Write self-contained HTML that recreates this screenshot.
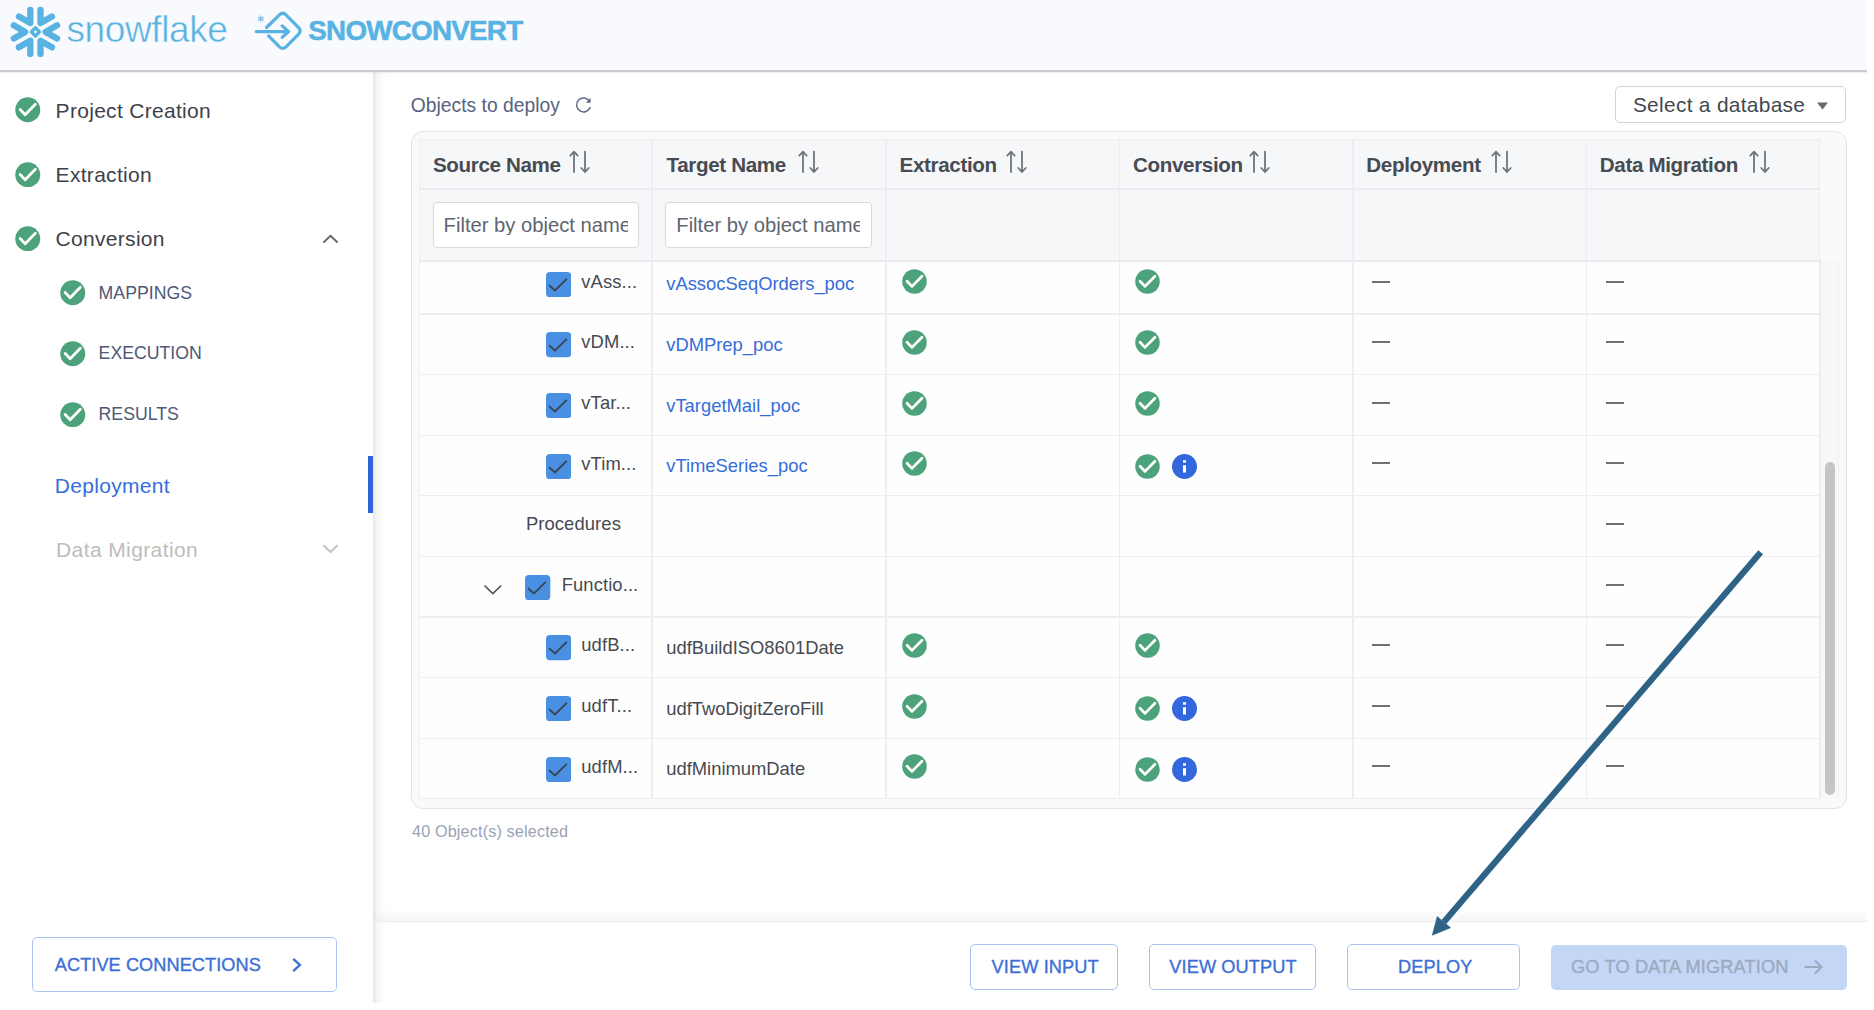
<!DOCTYPE html><html><head><meta charset="utf-8"><style>
html,body{margin:0;padding:0;background:#fff;width:1874px;height:1010px;overflow:hidden;position:relative}
.t{position:absolute;line-height:1;white-space:nowrap;font-family:"Liberation Sans",sans-serif}
.a{position:absolute;display:block}
.box{position:absolute;box-sizing:border-box}
</style></head><body>
<div class="box" style="left:0;top:0;width:1867px;height:69.5px;background:#F9FAFD"></div>
<div class="box" style="left:0;top:69.5px;width:1867px;height:2.5px;background:#CBCBCB"></div>
<div class="box" style="left:0;top:72px;width:1867px;height:2px;background:linear-gradient(#ececec,#fff)"></div>
<svg class="a" style="left:0;top:0" width="70" height="70"><path d="M57.03 25.30L45.60 31.90L57.03 38.50 M51.93 47.33L40.50 40.73L40.50 53.93 M30.30 53.93L30.30 40.73L18.87 47.33 M13.77 38.50L25.20 31.90L13.77 25.30 M18.87 16.47L30.30 23.07L30.30 9.87 M40.50 9.87L40.50 23.07L51.93 16.47" fill="none" stroke="#58B3E3" stroke-width="6.3" stroke-linecap="round" stroke-linejoin="round"/><path d="M35.4 27.799999999999997L39.5 31.9L35.4 36.0L31.299999999999997 31.9Z" fill="none" stroke="#58B3E3" stroke-width="3.4" stroke-linejoin="round"/></svg>
<div class="t" style="left:66.5px;top:10.68px;font-size:37px;color:#58B3E3;font-weight:400;letter-spacing:-0.4px;-webkit-text-stroke:0.45px #F9FAFD;">snowflake</div>
<svg class="a" style="left:250px;top:9.3px" width="60" height="48" viewBox="250 8 60 48">
<path d="M266.5 26.5 L279.5 13.8 Q282.8 10.8 286 13.8 L298.6 26.6 Q301.6 29.9 298.6 33.1 L286 45.8 Q282.8 48.9 279.5 45.8 L268.6 34.9" fill="none" stroke="#58B3E3" stroke-width="3.2" stroke-linecap="round" stroke-linejoin="round"/>
<path d="M256.2 30.6 L288.5 30.6 M282.2 24.9 L288.6 30.6 L282.2 36.3" fill="none" stroke="#58B3E3" stroke-width="3.2" stroke-linecap="round" stroke-linejoin="round"/>
<path d="M260.8 14.9 V20.7 M258.3 16.35 L263.3 19.25 M258.3 19.25 L263.3 16.35" stroke="#7FC3EA" stroke-width="1.3" stroke-linecap="round"/>
</svg>
<div class="t" style="left:308.3px;top:16.67px;font-size:27.8px;color:#58B3E3;font-weight:700;letter-spacing:-0.75px;-webkit-text-stroke:0.5px #58B3E3;">SNOWCONVERT</div>
<div class="box" style="left:373px;top:72px;width:14px;height:931px;background:linear-gradient(to right,rgba(0,0,0,0.10),rgba(0,0,0,0.03) 30%,rgba(0,0,0,0))"></div>
<svg class="a" style="left:15.1px;top:97.2px" width="25.5" height="25.5" viewBox="-12.75 -12.75 25.5 25.5"><circle r="12.5" fill="#4CA27A"/><path d="M-7.6 -0.2 L-2.6 5 L7.6 -5.4" fill="none" stroke="#fff" stroke-width="2.8" stroke-linecap="round" stroke-linejoin="round"/></svg>
<div class="t" style="left:55.6px;top:100.02px;font-size:21px;color:#3D4249;font-weight:400;letter-spacing:0.3px;">Project Creation</div>
<svg class="a" style="left:15.1px;top:161.6px" width="25.5" height="25.5" viewBox="-12.75 -12.75 25.5 25.5"><circle r="12.5" fill="#4CA27A"/><path d="M-7.6 -0.2 L-2.6 5 L7.6 -5.4" fill="none" stroke="#fff" stroke-width="2.8" stroke-linecap="round" stroke-linejoin="round"/></svg>
<div class="t" style="left:55.6px;top:164.22px;font-size:21px;color:#3D4249;font-weight:400;letter-spacing:0.3px;">Extraction</div>
<svg class="a" style="left:15.1px;top:225.8px" width="25.5" height="25.5" viewBox="-12.75 -12.75 25.5 25.5"><circle r="12.5" fill="#4CA27A"/><path d="M-7.6 -0.2 L-2.6 5 L7.6 -5.4" fill="none" stroke="#fff" stroke-width="2.8" stroke-linecap="round" stroke-linejoin="round"/></svg>
<div class="t" style="left:55.6px;top:228.32px;font-size:21px;color:#3D4249;font-weight:400;letter-spacing:0.3px;">Conversion</div>
<svg class="a" style="left:318px;top:228px" width="24" height="20"><path d="M6 14 L12.5 7.8 L19 14" fill="none" stroke="#686A6E" stroke-width="2" stroke-linecap="round" stroke-linejoin="round"/></svg>
<svg class="a" style="left:60.3px;top:280.2px" width="25.5" height="25.5" viewBox="-12.75 -12.75 25.5 25.5"><circle r="12.5" fill="#4CA27A"/><path d="M-7.6 -0.2 L-2.6 5 L7.6 -5.4" fill="none" stroke="#fff" stroke-width="2.8" stroke-linecap="round" stroke-linejoin="round"/></svg>
<div class="t" style="left:98.6px;top:284.62px;font-size:17.7px;color:#4D5976;font-weight:400;letter-spacing:0px;">MAPPINGS</div>
<svg class="a" style="left:60.3px;top:341.1px" width="25.5" height="25.5" viewBox="-12.75 -12.75 25.5 25.5"><circle r="12.5" fill="#4CA27A"/><path d="M-7.6 -0.2 L-2.6 5 L7.6 -5.4" fill="none" stroke="#fff" stroke-width="2.8" stroke-linecap="round" stroke-linejoin="round"/></svg>
<div class="t" style="left:98.6px;top:345.22px;font-size:17.7px;color:#4D5976;font-weight:400;letter-spacing:0px;">EXECUTION</div>
<svg class="a" style="left:60.3px;top:401.6px" width="25.5" height="25.5" viewBox="-12.75 -12.75 25.5 25.5"><circle r="12.5" fill="#4CA27A"/><path d="M-7.6 -0.2 L-2.6 5 L7.6 -5.4" fill="none" stroke="#fff" stroke-width="2.8" stroke-linecap="round" stroke-linejoin="round"/></svg>
<div class="t" style="left:98.6px;top:405.92px;font-size:17.7px;color:#4D5976;font-weight:400;letter-spacing:0px;">RESULTS</div>
<div class="t" style="left:54.8px;top:475.22px;font-size:21px;color:#356EDB;font-weight:400;letter-spacing:0.3px;">Deployment</div>
<div class="box" style="left:368px;top:456.3px;width:5px;height:56.3px;background:#2F63D9"></div>
<div class="t" style="left:56.0px;top:538.82px;font-size:21px;color:#BDBDBD;font-weight:400;letter-spacing:0.4px;">Data Migration</div>
<svg class="a" style="left:318px;top:540px" width="24" height="20"><path d="M6 5.8 L12.5 12 L19 5.8" fill="none" stroke="#C2C2C2" stroke-width="2" stroke-linecap="round" stroke-linejoin="round"/></svg>
<div class="box" style="left:32px;top:937.3px;width:304.5px;height:54.6px;border:1.6px solid #A9C3F0;border-radius:5px"></div>
<div class="t" style="left:54.8px;top:955.99px;font-size:18.2px;color:#3B6FD6;font-weight:400;letter-spacing:0.05px;-webkit-text-stroke:0.35px #3B6FD6;">ACTIVE CONNECTIONS</div>
<svg class="a" style="left:286px;top:954px" width="22" height="22"><path d="M7.2 4.8 L13.8 11 L7.2 17.2" fill="none" stroke="#3B6FD6" stroke-width="2.4"/></svg>
<div class="t" style="left:410.8px;top:96.26px;font-size:19.3px;color:#58627E;font-weight:400;letter-spacing:0px;">Objects to deploy</div>
<svg class="a" style="left:572px;top:94px" width="22" height="22" viewBox="572 94 22 22"><path d="M589.6 101.3 A7 7 0 1 0 590.3 107" fill="none" stroke="#5F6883" stroke-width="1.5"/><path d="M590.6 98 L590.6 102.8 L585.8 102.8 Z" fill="#5F6883"/></svg>
<div class="box" style="left:1615.4px;top:86.4px;width:231px;height:37px;border:1.6px solid #D0D3D8;border-radius:5px;background:#fff"></div>
<div class="t" style="left:1632.9px;top:95.01px;font-size:20.9px;color:#43484E;font-weight:400;letter-spacing:0.3px;">Select a database</div>
<svg class="a" style="left:1815px;top:100px" width="16" height="12"><path d="M2 2.5 L13 2.5 L7.5 9.4 Z" fill="#6A6A6A"/></svg>
<div class="box" style="left:411px;top:131px;width:1435.7px;height:678px;border:1.6px solid #E1E4EC;border-radius:12px;background:#FAFAFA"></div>
<div class="box" style="left:419px;top:139px;width:1401px;height:660px;background:#FEFEFE;border:1px solid #EDEEF1"></div>
<div class="box" style="left:419px;top:139px;width:1401px;height:122px;background:#F6F7F9;border:1px solid #ECEEF1"></div>
<div class="box" style="left:419px;top:188.3px;width:1401px;height:1.4px;background:#EAECEF"></div>
<div class="box" style="left:419px;top:260.3px;width:1401px;height:1.6px;background:#E9EBEE"></div>
<div class="box" style="left:1819.5px;top:261px;width:19px;height:538px;background:#F8F8F8;border-left:1px solid #EBEBEB;border-right:1px solid #EFEFEF"></div>
<div class="box" style="left:1825px;top:462px;width:10px;height:333px;background:#C5C5C5;border-radius:5px"></div>
<div class="box" style="left:419px;top:313.3px;width:1401px;height:1.4px;background:#ECEEF1"></div>
<div class="box" style="left:419px;top:373.9px;width:1401px;height:1.4px;background:#ECEEF1"></div>
<div class="box" style="left:419px;top:434.5px;width:1401px;height:1.4px;background:#ECEEF1"></div>
<div class="box" style="left:419px;top:495.1px;width:1401px;height:1.4px;background:#ECEEF1"></div>
<div class="box" style="left:419px;top:555.7px;width:1401px;height:1.4px;background:#ECEEF1"></div>
<div class="box" style="left:419px;top:616.3px;width:1401px;height:1.4px;background:#ECEEF1"></div>
<div class="box" style="left:419px;top:676.9px;width:1401px;height:1.4px;background:#ECEEF1"></div>
<div class="box" style="left:419px;top:737.5px;width:1401px;height:1.4px;background:#ECEEF1"></div>
<div class="box" style="left:419px;top:798.1px;width:1401px;height:1.4px;background:#ECEEF1"></div>
<div class="box" style="left:651.3px;top:139px;width:1.4px;height:660px;background:#ECEEF1"></div>
<div class="box" style="left:885.3px;top:139px;width:1.4px;height:660px;background:#ECEEF1"></div>
<div class="box" style="left:1118.8px;top:139px;width:1.4px;height:660px;background:#ECEEF1"></div>
<div class="box" style="left:1352.3px;top:139px;width:1.4px;height:660px;background:#ECEEF1"></div>
<div class="box" style="left:1585.8px;top:139px;width:1.4px;height:660px;background:#ECEEF1"></div>
<div class="t" style="left:432.9px;top:154.86px;font-size:20.6px;color:#474C53;font-weight:700;letter-spacing:-0.35px;">Source Name</div>
<svg class="a" style="left:569.2px;top:148px" width="24" height="28" viewBox="0 0 24 28"><path d="M5 3.6 L5 24 M1.3 7.6 L5 3.6 L8.7 7.6 M16 3.6 L16 24 M12.3 20 L16 24 L19.7 20" fill="none" stroke="#6E747B" stroke-width="1.8" stroke-linecap="round" stroke-linejoin="round"/></svg>
<div class="t" style="left:666.5px;top:154.86px;font-size:20.6px;color:#474C53;font-weight:700;letter-spacing:-0.35px;">Target Name</div>
<svg class="a" style="left:797.5px;top:148px" width="24" height="28" viewBox="0 0 24 28"><path d="M5 3.6 L5 24 M1.3 7.6 L5 3.6 L8.7 7.6 M16 3.6 L16 24 M12.3 20 L16 24 L19.7 20" fill="none" stroke="#6E747B" stroke-width="1.8" stroke-linecap="round" stroke-linejoin="round"/></svg>
<div class="t" style="left:899.6px;top:154.86px;font-size:20.6px;color:#474C53;font-weight:700;letter-spacing:-0.35px;">Extraction</div>
<svg class="a" style="left:1006px;top:148px" width="24" height="28" viewBox="0 0 24 28"><path d="M5 3.6 L5 24 M1.3 7.6 L5 3.6 L8.7 7.6 M16 3.6 L16 24 M12.3 20 L16 24 L19.7 20" fill="none" stroke="#6E747B" stroke-width="1.8" stroke-linecap="round" stroke-linejoin="round"/></svg>
<div class="t" style="left:1133.0px;top:154.86px;font-size:20.6px;color:#474C53;font-weight:700;letter-spacing:-0.35px;">Conversion</div>
<svg class="a" style="left:1249px;top:148px" width="24" height="28" viewBox="0 0 24 28"><path d="M5 3.6 L5 24 M1.3 7.6 L5 3.6 L8.7 7.6 M16 3.6 L16 24 M12.3 20 L16 24 L19.7 20" fill="none" stroke="#6E747B" stroke-width="1.8" stroke-linecap="round" stroke-linejoin="round"/></svg>
<div class="t" style="left:1366.3px;top:154.86px;font-size:20.6px;color:#474C53;font-weight:700;letter-spacing:-0.35px;">Deployment</div>
<svg class="a" style="left:1490.5px;top:148px" width="24" height="28" viewBox="0 0 24 28"><path d="M5 3.6 L5 24 M1.3 7.6 L5 3.6 L8.7 7.6 M16 3.6 L16 24 M12.3 20 L16 24 L19.7 20" fill="none" stroke="#6E747B" stroke-width="1.8" stroke-linecap="round" stroke-linejoin="round"/></svg>
<div class="t" style="left:1599.8px;top:154.86px;font-size:20.6px;color:#474C53;font-weight:700;letter-spacing:-0.35px;">Data Migration</div>
<svg class="a" style="left:1749px;top:148px" width="24" height="28" viewBox="0 0 24 28"><path d="M5 3.6 L5 24 M1.3 7.6 L5 3.6 L8.7 7.6 M16 3.6 L16 24 M12.3 20 L16 24 L19.7 20" fill="none" stroke="#6E747B" stroke-width="1.8" stroke-linecap="round" stroke-linejoin="round"/></svg>
<div class="box" style="left:432.6px;top:202.2px;width:206.5px;height:45.6px;border:1.6px solid #D6DADF;border-radius:4px;background:#fff;overflow:hidden"><div class="t" style="left:10px;top:11.50px;font-size:20.2px;color:#5E6570;width:184px;overflow:hidden">Filter by object name</div></div>
<div class="box" style="left:665.3px;top:202.2px;width:206.5px;height:45.6px;border:1.6px solid #D6DADF;border-radius:4px;background:#fff;overflow:hidden"><div class="t" style="left:10px;top:11.50px;font-size:20.2px;color:#5E6570;width:184px;overflow:hidden">Filter by object name</div></div>
<svg class="a" style="left:545.6px;top:271.7px" width="25.3" height="25.3" viewBox="0 0 25.3 25.3"><rect x="0" y="0" width="25.3" height="25.3" rx="4" fill="#4A90E2"/><path d="M2.9 13.1 L9 18.4 L20.8 6.9" fill="none" stroke="#3A4450" stroke-width="1.9"/></svg>
<div class="t" style="left:581.3px;top:272.72px;font-size:18.4px;color:#464A51;font-weight:400;letter-spacing:0.1px;">vAss...</div>
<div class="t" style="left:666.2px;top:275.32px;font-size:18.4px;color:#356DDA;font-weight:400;letter-spacing:0px;">vAssocSeqOrders_poc</div>
<svg class="a" style="left:902.1px;top:269.4px" width="25" height="25" viewBox="-12.75 -12.75 25.5 25.5"><circle r="12.5" fill="#4CA27A"/><path d="M-7.6 -0.2 L-2.6 5 L7.6 -5.4" fill="none" stroke="#fff" stroke-width="2.8" stroke-linecap="round" stroke-linejoin="round"/></svg>
<svg class="a" style="left:1135.2px;top:269.4px" width="25" height="25" viewBox="-12.75 -12.75 25.5 25.5"><circle r="12.5" fill="#4CA27A"/><path d="M-7.6 -0.2 L-2.6 5 L7.6 -5.4" fill="none" stroke="#fff" stroke-width="2.8" stroke-linecap="round" stroke-linejoin="round"/></svg>
<div class="a" style="left:1371.6px;top:280.59999999999997px;width:18px;height:2px;background:#707070"></div>
<div class="a" style="left:1605.8px;top:280.59999999999997px;width:18px;height:2px;background:#707070"></div>
<svg class="a" style="left:545.6px;top:332.3px" width="25.3" height="25.3" viewBox="0 0 25.3 25.3"><rect x="0" y="0" width="25.3" height="25.3" rx="4" fill="#4A90E2"/><path d="M2.9 13.1 L9 18.4 L20.8 6.9" fill="none" stroke="#3A4450" stroke-width="1.9"/></svg>
<div class="t" style="left:581.3px;top:333.32px;font-size:18.4px;color:#464A51;font-weight:400;letter-spacing:0.1px;">vDM...</div>
<div class="t" style="left:666.2px;top:335.92px;font-size:18.4px;color:#356DDA;font-weight:400;letter-spacing:0px;">vDMPrep_poc</div>
<svg class="a" style="left:902.1px;top:330.0px" width="25" height="25" viewBox="-12.75 -12.75 25.5 25.5"><circle r="12.5" fill="#4CA27A"/><path d="M-7.6 -0.2 L-2.6 5 L7.6 -5.4" fill="none" stroke="#fff" stroke-width="2.8" stroke-linecap="round" stroke-linejoin="round"/></svg>
<svg class="a" style="left:1135.2px;top:330.0px" width="25" height="25" viewBox="-12.75 -12.75 25.5 25.5"><circle r="12.5" fill="#4CA27A"/><path d="M-7.6 -0.2 L-2.6 5 L7.6 -5.4" fill="none" stroke="#fff" stroke-width="2.8" stroke-linecap="round" stroke-linejoin="round"/></svg>
<div class="a" style="left:1371.6px;top:341.2px;width:18px;height:2px;background:#707070"></div>
<div class="a" style="left:1605.8px;top:341.2px;width:18px;height:2px;background:#707070"></div>
<svg class="a" style="left:545.6px;top:392.9px" width="25.3" height="25.3" viewBox="0 0 25.3 25.3"><rect x="0" y="0" width="25.3" height="25.3" rx="4" fill="#4A90E2"/><path d="M2.9 13.1 L9 18.4 L20.8 6.9" fill="none" stroke="#3A4450" stroke-width="1.9"/></svg>
<div class="t" style="left:581.3px;top:393.92px;font-size:18.4px;color:#464A51;font-weight:400;letter-spacing:0.1px;">vTar...</div>
<div class="t" style="left:666.2px;top:396.52px;font-size:18.4px;color:#356DDA;font-weight:400;letter-spacing:0px;">vTargetMail_poc</div>
<svg class="a" style="left:902.1px;top:390.6px" width="25" height="25" viewBox="-12.75 -12.75 25.5 25.5"><circle r="12.5" fill="#4CA27A"/><path d="M-7.6 -0.2 L-2.6 5 L7.6 -5.4" fill="none" stroke="#fff" stroke-width="2.8" stroke-linecap="round" stroke-linejoin="round"/></svg>
<svg class="a" style="left:1135.2px;top:390.6px" width="25" height="25" viewBox="-12.75 -12.75 25.5 25.5"><circle r="12.5" fill="#4CA27A"/><path d="M-7.6 -0.2 L-2.6 5 L7.6 -5.4" fill="none" stroke="#fff" stroke-width="2.8" stroke-linecap="round" stroke-linejoin="round"/></svg>
<div class="a" style="left:1371.6px;top:401.8px;width:18px;height:2px;background:#707070"></div>
<div class="a" style="left:1605.8px;top:401.8px;width:18px;height:2px;background:#707070"></div>
<svg class="a" style="left:545.6px;top:453.5px" width="25.3" height="25.3" viewBox="0 0 25.3 25.3"><rect x="0" y="0" width="25.3" height="25.3" rx="4" fill="#4A90E2"/><path d="M2.9 13.1 L9 18.4 L20.8 6.9" fill="none" stroke="#3A4450" stroke-width="1.9"/></svg>
<div class="t" style="left:581.3px;top:454.52px;font-size:18.4px;color:#464A51;font-weight:400;letter-spacing:0.1px;">vTim...</div>
<div class="t" style="left:666.2px;top:457.12px;font-size:18.4px;color:#356DDA;font-weight:400;letter-spacing:0px;">vTimeSeries_poc</div>
<svg class="a" style="left:902.1px;top:451.2px" width="25" height="25" viewBox="-12.75 -12.75 25.5 25.5"><circle r="12.5" fill="#4CA27A"/><path d="M-7.6 -0.2 L-2.6 5 L7.6 -5.4" fill="none" stroke="#fff" stroke-width="2.8" stroke-linecap="round" stroke-linejoin="round"/></svg>
<svg class="a" style="left:1135.2px;top:453.8px" width="25" height="25" viewBox="-12.75 -12.75 25.5 25.5"><circle r="12.5" fill="#4CA27A"/><path d="M-7.6 -0.2 L-2.6 5 L7.6 -5.4" fill="none" stroke="#fff" stroke-width="2.8" stroke-linecap="round" stroke-linejoin="round"/></svg>
<svg class="a" style="left:1171.8px;top:453.9px" width="25" height="25" viewBox="-12.5 -12.5 25 25"><circle r="12.5" fill="#3368DD"/><rect x="-1.5" y="-6.3" width="3" height="2.5" fill="#fff"/><rect x="-1.5" y="-1.3" width="3" height="7.3" fill="#fff"/></svg>
<div class="a" style="left:1371.6px;top:462.40000000000003px;width:18px;height:2px;background:#707070"></div>
<div class="a" style="left:1605.8px;top:462.40000000000003px;width:18px;height:2px;background:#707070"></div>
<div class="t" style="left:525.9px;top:514.92px;font-size:18.4px;color:#464A51;font-weight:400;letter-spacing:0.1px;">Procedures</div>
<div class="a" style="left:1605.8px;top:523.0px;width:18px;height:2px;background:#707070"></div>
<svg class="a" style="left:480px;top:581.7px" width="26" height="16"><path d="M4.5 3.5 L12.8 11.6 L21.2 3.5" fill="none" stroke="#50565E" stroke-width="1.7"/></svg>
<svg class="a" style="left:525.4px;top:575.1px" width="25.3" height="25.3" viewBox="0 0 25.3 25.3"><rect x="0" y="0" width="25.3" height="25.3" rx="4" fill="#4A90E2"/><path d="M2.9 13.1 L9 18.4 L20.8 6.9" fill="none" stroke="#3A4450" stroke-width="1.9"/></svg>
<div class="t" style="left:561.7px;top:576.12px;font-size:18.4px;color:#464A51;font-weight:400;letter-spacing:0.1px;">Functio...</div>
<div class="a" style="left:1605.8px;top:583.5999999999999px;width:18px;height:2px;background:#707070"></div>
<svg class="a" style="left:545.6px;top:635.3px" width="25.3" height="25.3" viewBox="0 0 25.3 25.3"><rect x="0" y="0" width="25.3" height="25.3" rx="4" fill="#4A90E2"/><path d="M2.9 13.1 L9 18.4 L20.8 6.9" fill="none" stroke="#3A4450" stroke-width="1.9"/></svg>
<div class="t" style="left:581.3px;top:636.32px;font-size:18.4px;color:#464A51;font-weight:400;letter-spacing:0.1px;">udfB...</div>
<div class="t" style="left:666.2px;top:638.92px;font-size:18.4px;color:#464A51;font-weight:400;letter-spacing:0px;">udfBuildISO8601Date</div>
<svg class="a" style="left:902.1px;top:633.0px" width="25" height="25" viewBox="-12.75 -12.75 25.5 25.5"><circle r="12.5" fill="#4CA27A"/><path d="M-7.6 -0.2 L-2.6 5 L7.6 -5.4" fill="none" stroke="#fff" stroke-width="2.8" stroke-linecap="round" stroke-linejoin="round"/></svg>
<svg class="a" style="left:1135.2px;top:633.0px" width="25" height="25" viewBox="-12.75 -12.75 25.5 25.5"><circle r="12.5" fill="#4CA27A"/><path d="M-7.6 -0.2 L-2.6 5 L7.6 -5.4" fill="none" stroke="#fff" stroke-width="2.8" stroke-linecap="round" stroke-linejoin="round"/></svg>
<div class="a" style="left:1371.6px;top:644.1999999999999px;width:18px;height:2px;background:#707070"></div>
<div class="a" style="left:1605.8px;top:644.1999999999999px;width:18px;height:2px;background:#707070"></div>
<svg class="a" style="left:545.6px;top:695.9px" width="25.3" height="25.3" viewBox="0 0 25.3 25.3"><rect x="0" y="0" width="25.3" height="25.3" rx="4" fill="#4A90E2"/><path d="M2.9 13.1 L9 18.4 L20.8 6.9" fill="none" stroke="#3A4450" stroke-width="1.9"/></svg>
<div class="t" style="left:581.3px;top:696.92px;font-size:18.4px;color:#464A51;font-weight:400;letter-spacing:0.1px;">udfT...</div>
<div class="t" style="left:666.2px;top:699.52px;font-size:18.4px;color:#464A51;font-weight:400;letter-spacing:0px;">udfTwoDigitZeroFill</div>
<svg class="a" style="left:902.1px;top:693.6px" width="25" height="25" viewBox="-12.75 -12.75 25.5 25.5"><circle r="12.5" fill="#4CA27A"/><path d="M-7.6 -0.2 L-2.6 5 L7.6 -5.4" fill="none" stroke="#fff" stroke-width="2.8" stroke-linecap="round" stroke-linejoin="round"/></svg>
<svg class="a" style="left:1135.2px;top:696.2px" width="25" height="25" viewBox="-12.75 -12.75 25.5 25.5"><circle r="12.5" fill="#4CA27A"/><path d="M-7.6 -0.2 L-2.6 5 L7.6 -5.4" fill="none" stroke="#fff" stroke-width="2.8" stroke-linecap="round" stroke-linejoin="round"/></svg>
<svg class="a" style="left:1171.8px;top:696.3px" width="25" height="25" viewBox="-12.5 -12.5 25 25"><circle r="12.5" fill="#3368DD"/><rect x="-1.5" y="-6.3" width="3" height="2.5" fill="#fff"/><rect x="-1.5" y="-1.3" width="3" height="7.3" fill="#fff"/></svg>
<div class="a" style="left:1371.6px;top:704.8px;width:18px;height:2px;background:#707070"></div>
<div class="a" style="left:1605.8px;top:704.8px;width:18px;height:2px;background:#707070"></div>
<svg class="a" style="left:545.6px;top:756.5px" width="25.3" height="25.3" viewBox="0 0 25.3 25.3"><rect x="0" y="0" width="25.3" height="25.3" rx="4" fill="#4A90E2"/><path d="M2.9 13.1 L9 18.4 L20.8 6.9" fill="none" stroke="#3A4450" stroke-width="1.9"/></svg>
<div class="t" style="left:581.3px;top:757.52px;font-size:18.4px;color:#464A51;font-weight:400;letter-spacing:0.1px;">udfM...</div>
<div class="t" style="left:666.2px;top:760.12px;font-size:18.4px;color:#464A51;font-weight:400;letter-spacing:0px;">udfMinimumDate</div>
<svg class="a" style="left:902.1px;top:754.2px" width="25" height="25" viewBox="-12.75 -12.75 25.5 25.5"><circle r="12.5" fill="#4CA27A"/><path d="M-7.6 -0.2 L-2.6 5 L7.6 -5.4" fill="none" stroke="#fff" stroke-width="2.8" stroke-linecap="round" stroke-linejoin="round"/></svg>
<svg class="a" style="left:1135.2px;top:756.8px" width="25" height="25" viewBox="-12.75 -12.75 25.5 25.5"><circle r="12.5" fill="#4CA27A"/><path d="M-7.6 -0.2 L-2.6 5 L7.6 -5.4" fill="none" stroke="#fff" stroke-width="2.8" stroke-linecap="round" stroke-linejoin="round"/></svg>
<svg class="a" style="left:1171.8px;top:756.9px" width="25" height="25" viewBox="-12.5 -12.5 25 25"><circle r="12.5" fill="#3368DD"/><rect x="-1.5" y="-6.3" width="3" height="2.5" fill="#fff"/><rect x="-1.5" y="-1.3" width="3" height="7.3" fill="#fff"/></svg>
<div class="a" style="left:1371.6px;top:765.4px;width:18px;height:2px;background:#707070"></div>
<div class="a" style="left:1605.8px;top:765.4px;width:18px;height:2px;background:#707070"></div>
<div class="t" style="left:412.0px;top:822.69px;font-size:16.2px;color:#9AA3B6;font-weight:400;letter-spacing:0.15px;">40 Object(s) selected</div>
<div class="box" style="left:373px;top:909px;width:1494px;height:12px;background:linear-gradient(rgba(0,0,0,0),rgba(0,0,0,0.035))"></div>
<div class="box" style="left:373px;top:920.5px;width:1494px;height:1.5px;background:#EDEDED"></div>
<div class="box" style="left:970.3px;top:944px;width:147.70000000000005px;height:45.8px;border:1.6px solid #A9C3F0;border-radius:5px;background:#fff"></div><div class="t" style="left:991.6px;top:958.09px;font-size:18.2px;color:#3B6FD6;font-weight:400;letter-spacing:0.1px;-webkit-text-stroke:0.35px #3B6FD6;">VIEW INPUT</div>
<div class="box" style="left:1149.1px;top:944px;width:166.9000000000001px;height:45.8px;border:1.6px solid #A9C3F0;border-radius:5px;background:#fff"></div><div class="t" style="left:1169.3px;top:958.09px;font-size:18.2px;color:#3B6FD6;font-weight:400;letter-spacing:0.1px;-webkit-text-stroke:0.35px #3B6FD6;">VIEW OUTPUT</div>
<div class="box" style="left:1346.6px;top:944px;width:173.4000000000001px;height:45.8px;border:1.6px solid #A9C3F0;border-radius:5px;background:#fff"></div><div class="t" style="left:1398.0px;top:958.09px;font-size:18.2px;color:#3B6FD6;font-weight:400;letter-spacing:0.1px;-webkit-text-stroke:0.35px #3B6FD6;">DEPLOY</div>
<div class="box" style="left:1550.5px;top:944.5px;width:296.2px;height:45.5px;background:#C3D6F6;border-radius:5px"></div>
<div class="t" style="left:1571.0px;top:958.09px;font-size:18.2px;color:#9DA9BF;font-weight:400;letter-spacing:0.15px;-webkit-text-stroke:0.35px #9DA9BF;">GO TO DATA MIGRATION</div>
<svg class="a" style="left:1800px;top:955px" width="26" height="24"><path d="M4.5 12 L21.5 12 M15 5.5 L21.5 12 L15 18.5" fill="none" stroke="#9DA9BF" stroke-width="2"/></svg>
<svg class="a" style="left:0;top:0;pointer-events:none" width="1874" height="1010"><path d="M1760.7 552.3 L1443.9 921.9" stroke="#2E6286" stroke-width="6.2" stroke-linecap="butt"/><path d="M1432.3 935.3 L1437.2 916.6 L1450.6 927.7 Z" fill="#2E6286" stroke="#2E6286" stroke-width="0.6" stroke-linejoin="miter"/></svg>
</body></html>
